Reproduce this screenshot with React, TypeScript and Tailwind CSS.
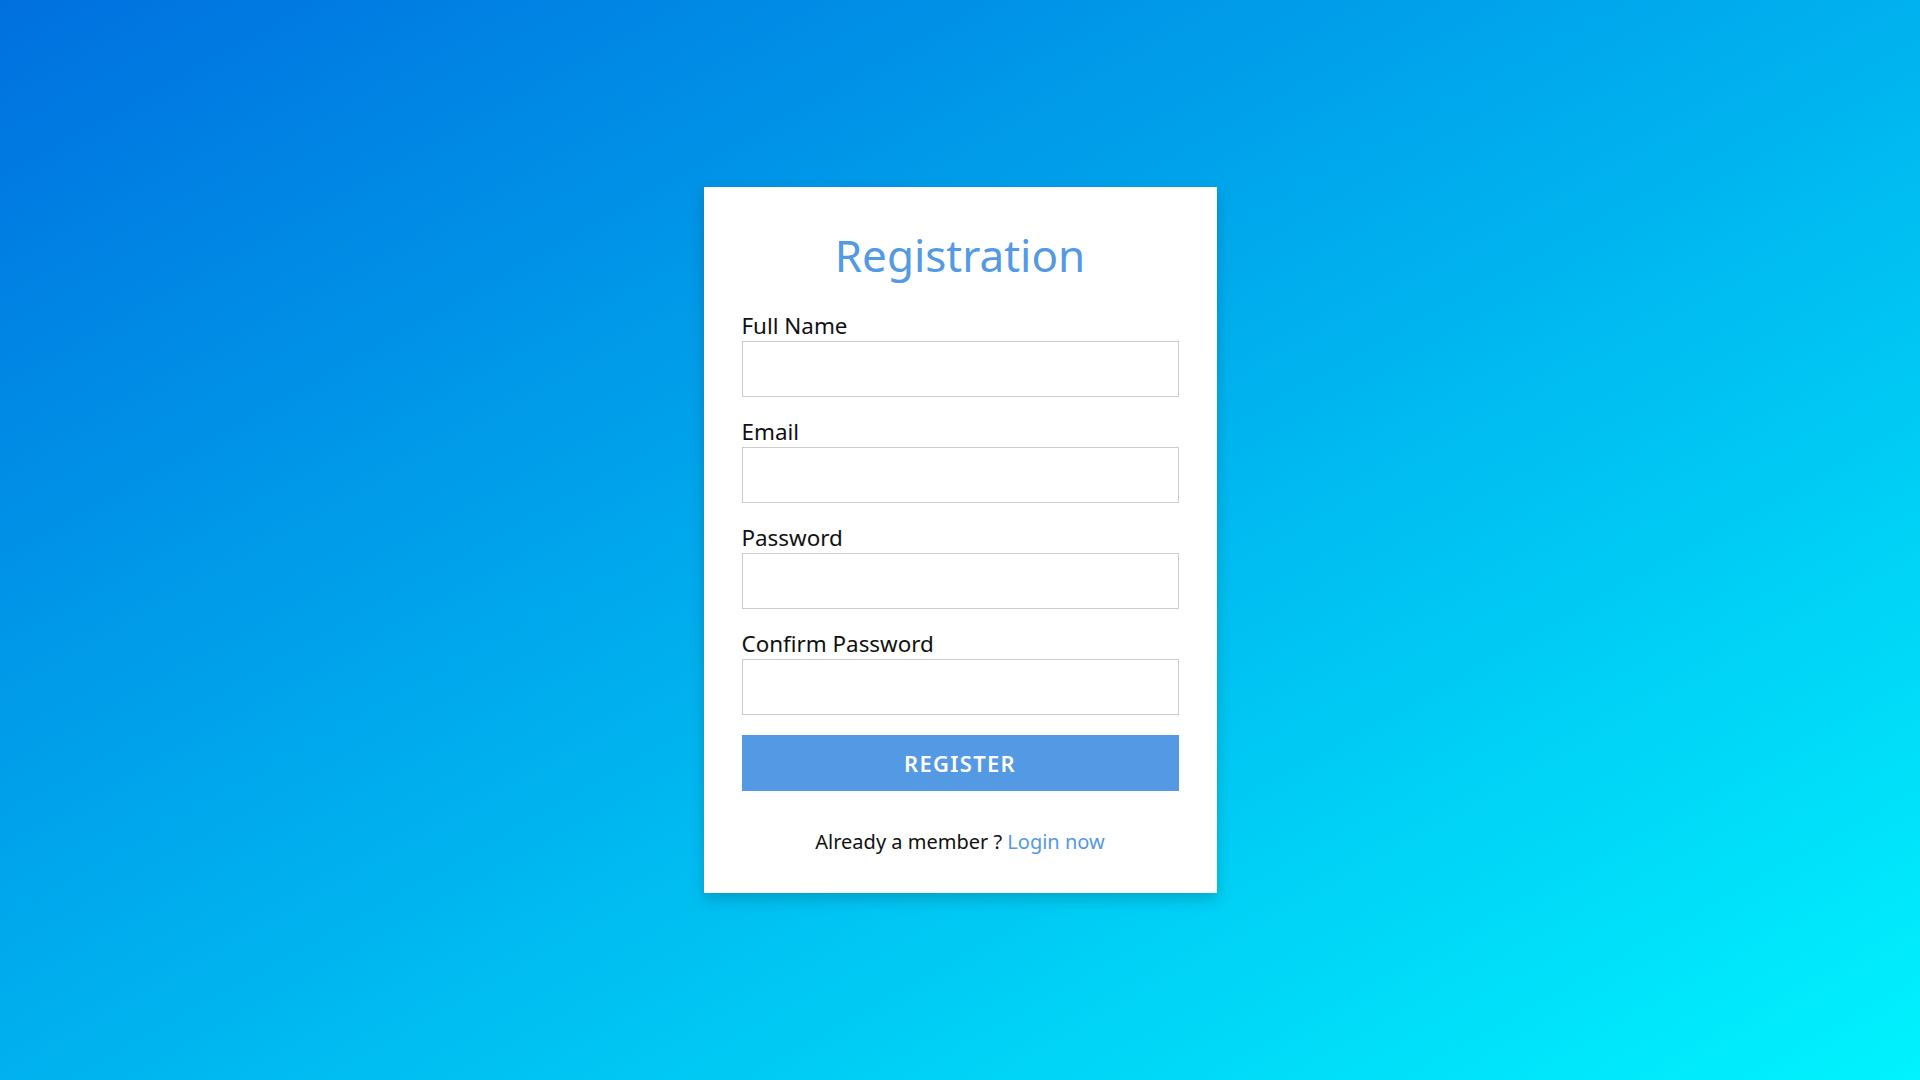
export default function App() {
  const fields = ["Full Name", "Email", "Password", "Confirm Password"];

  return (
    <div
      className="flex min-h-screen w-full items-center justify-center bg-[linear-gradient(to_bottom_right,#0070df,#00f3fe)]"
      style={{ fontFamily: "'Noto Sans', 'Open Sans', sans-serif" }}
    >
      <div className="w-[513px] bg-white px-[38px] pt-[38px] pb-[38px] shadow-[0_6px_14px_rgba(0,0,0,0.18)]">
        <h1 className="mb-[26px] text-center text-[44px] leading-[60px] font-normal text-[#5399e4]">
          Registration
        </h1>

        <form onSubmit={(e) => e.preventDefault()}>
          {fields.map((label) => (
            <div key={label} className="mb-[20px] flex flex-col">
              <label className="text-[22.4px] leading-[30px] text-[#111]">{label}</label>
              <input
                type={label.includes("Password") ? "password" : label === "Email" ? "email" : "text"}
                className="h-[56px] w-full border border-[#cccccc] bg-white px-3 text-[20px] outline-none"
              />
            </div>
          ))}

          <button
            type="submit"
            className="flex h-[56px] w-full items-center justify-center bg-[#5399e4] text-[22px] font-semibold tracking-[0.06em] text-white"
          >
            REGISTER
          </button>
        </form>

        <p className="mt-[37px] text-center text-[20px] leading-[27px] text-[#111]">
          Already a member ? <a href="#" className="text-[#5399e4]">Login now</a>
        </p>
      </div>
    </div>
  );
}
